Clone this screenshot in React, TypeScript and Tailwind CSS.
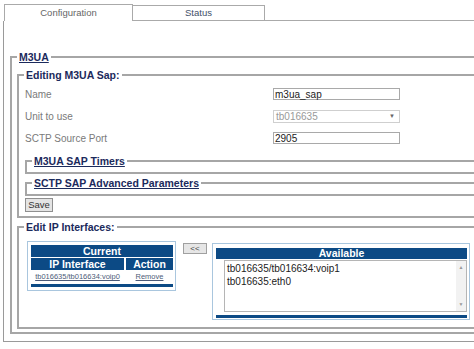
import React from 'react';

const legendCls = "ml-[5px] px-[2px] text-[10.5px] leading-[12px] font-bold text-[#1b2a5c]";

const Row = ({ label, children }: { label: string; children: React.ReactNode }) => (
  <div className="grid grid-cols-[248px_127px] items-center h-[22px]">
    <span className="text-[10px] text-[#7a7a7a]">{label}</span>
    {children}
  </div>
);

export default function App() {
  return (
    <div className="w-[474px] h-[349px] overflow-hidden bg-white font-['Liberation_Sans',Arial,sans-serif]">
      <div className="w-[500px] pt-[4px]">
        {/* tabs */}
        <div className="flex items-end h-[17px] pl-[4px]">
          <div className="w-[129px] h-[17px] border-l border-t border-r border-[#aaa] flex items-center justify-center text-[9.5px] text-[#666]">
            Configuration
          </div>
          <div className="w-[132px] h-[16px] border-t border-r border-b border-[#aaa] flex items-center justify-center text-[9.5px] text-[#3f4f6a]">
            Status
          </div>
          <div className="flex-1 h-[16px] border-b border-[#aaa]" />
        </div>

        {/* panel */}
        <div className="ml-[3px] border-l border-b border-[#9a9a9a] pt-[30px] pl-[6px] pb-[7px]">
          <fieldset className="border-2 border-[#a6a6a6]">
            <legend className={legendCls + " underline"}>M3UA</legend>
            <div className="pt-[6px] pl-[5px] pb-[3px]">
              <fieldset className="border-2 border-[#a6a6a6]">
                <legend className={legendCls}>Editing M3UA Sap:</legend>
                <div className="pt-[2px] pl-[6px] pb-[4px]">
                  <Row label="Name">
                    <div className="h-[12px] border border-[#a9a9a9] bg-white flex items-center px-[1px] text-[10px] text-[#222]">m3ua_sap</div>
                  </Row>
                  <Row label="Unit to use">
                    <div className="h-[13px] border border-[#cfcfcf] bg-white flex items-center justify-between px-[2px] text-[10px] text-[#999]">
                      <span>tb016635</span>
                      <span className="text-[6px] text-[#666] pr-[2px]">▼</span>
                    </div>
                  </Row>
                  <Row label="SCTP Source Port">
                    <div className="h-[12px] border border-[#a9a9a9] bg-white flex items-center px-[1px] text-[10px] text-[#222]">2905</div>
                  </Row>

                  <fieldset className="mt-[6px] border-2 border-[#a6a6a6]">
                    <legend className={legendCls + " underline"}>M3UA SAP Timers</legend>
                    <div className="h-[5px]" />
                  </fieldset>
                  <fieldset className="mt-[3px] border-2 border-[#a6a6a6]">
                    <legend className={legendCls + " underline"}>SCTP SAP Advanced Parameters</legend>
                    <div className="h-[5px]" />
                  </fieldset>

                  <button className="mt-[2px] w-[28px] h-[14px] border border-[#8f8f8f] bg-[#e4e4e4] text-[9.5px] leading-[12px] text-[#333] flex items-center justify-center">
                    Save
                  </button>
                </div>
              </fieldset>

              <fieldset className="mt-[3px] border-2 border-[#a6a6a6]">
                <legend className={legendCls}>Edit IP Interfaces:</legend>
                <div className="pt-[8px] pl-[8px] pb-[7px] flex items-start">
                  {/* current */}
                  <div className="w-[149px] border border-[#a9c6de] bg-white pl-[3px] pr-[2px] pt-[3px] pb-[3px]">
                    <div className="h-[12px] bg-[#0c4a85] text-white text-[10.5px] font-bold leading-[12px] text-center">Current</div>
                    <div className="mt-[1px] flex gap-[2px]">
                      <div className="w-[93px] h-[12px] bg-[#0c4a85] text-white text-[10.5px] font-bold leading-[12px] text-center">IP Interface</div>
                      <div className="flex-1 h-[12px] bg-[#0c4a85] text-white text-[10.5px] font-bold leading-[12px] text-center">Action</div>
                    </div>
                    <div className="flex gap-[2px] h-[14px] items-center">
                      <span className="w-[93px] text-center text-[7.5px] text-[#4d5b78] underline">tb016635/tb016634:voip0</span>
                      <span className="flex-1 text-center text-[7.5px] text-[#4d5b78] underline">Remove</span>
                    </div>
                    <div className="h-[3px] bg-[#0c4a85]" />
                  </div>

                  {/* move button */}
                  <button className="ml-[7px] mt-[2px] w-[24px] h-[11px] border border-[#a0a0a0] bg-[#e6e6e6] text-[8px] leading-[9px] text-[#444] flex items-center justify-center">
                    &lt;&lt;
                  </button>

                  {/* available */}
                  <div className="ml-[5px] mt-[2px] w-[258px] h-[77px] border border-[#a9c6de] bg-white pl-[3px] pr-[2px] pt-[4px]">
                    <div className="h-[11px] bg-[#0c4a85] text-white text-[10.5px] font-bold leading-[11px] text-center">Available</div>
                    <div className="ml-[8px] mt-[1px] h-[52px] border border-[#b5b5b5] bg-white flex">
                      <div className="flex-1 pl-[2px] pt-[2px] text-[10px] leading-[12.5px] text-[#222]">
                        <div>tb016635/tb016634:voip1</div>
                        <div>tb016635:eth0</div>
                      </div>
                      <div className="w-[10px] bg-[#f2f2f2] flex flex-col justify-between items-center text-[5px] text-[#999] py-[3px]">
                        <span>▲</span>
                        <span>▼</span>
                      </div>
                    </div>
                    <div className="mt-[3px] h-[3px] bg-[#0c4a85]" />
                  </div>
                </div>
              </fieldset>
            </div>
          </fieldset>
        </div>
      </div>
    </div>
  );
}
